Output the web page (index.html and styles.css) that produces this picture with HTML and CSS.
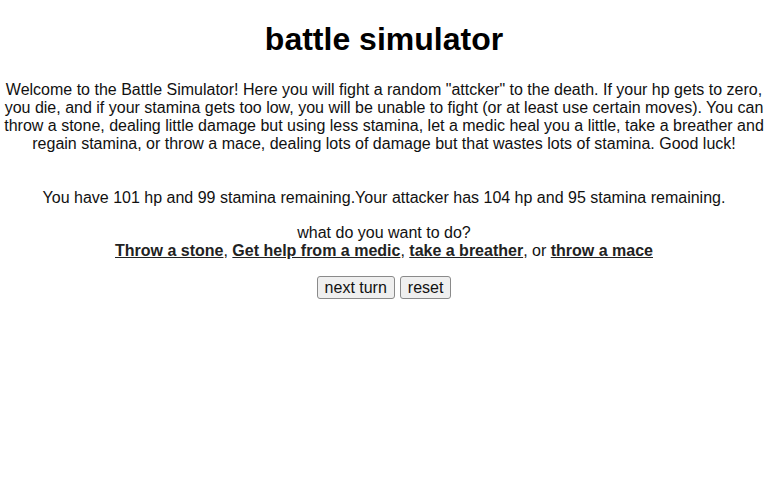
FILE: index.html
```html
<!DOCTYPE html>
<html lang="en">
<head>
<meta charset="utf-8">
<title>battle simulator</title>
<link rel="stylesheet" href="styles.css">
</head>
<body>
<main class="game">
  <h1 class="title">battle simulator</h1>
  <p class="intro">Welcome to the Battle Simulator! Here you will fight a random "attcker" to the death. If your hp gets to zero, you die, and if your stamina gets too low, you will be unable to fight (or at least use certain moves). You can throw a stone, dealing little damage but using less stamina, let a medic heal you a little, take a breather and regain stamina, or throw a mace, dealing lots of damage but that wastes lots of stamina. Good luck!</p>
  <p class="status">You have 101 hp and 99 stamina remaining.Your attacker has 104 hp and 95 stamina remaining.</p>
  <p class="prompt">what do you want to do?<br>
    <a class="move" href="#">Throw a stone</a>, <a class="move" href="#">Get help from a medic</a>, <a class="move" href="#">take a breather</a>, or <a class="move" href="#">throw a mace</a>
  </p>
  <div class="controls">
    <button class="btn" type="button">next turn</button>
    <button class="btn" type="button">reset</button>
  </div>
</main>
</body>
</html>
```

FILE: styles.css
```css
html, body {
  background: #fff;
}

body {
  margin: 0;
  font-family: "Liberation Sans", Arial, sans-serif;
  font-size: 16px;
  color: #111;
  text-align: center;
}

.title {
  font-size: 32px;
  font-weight: bold;
  margin: 21px 0 23px;
  color: #000;
}

.intro {
  margin: 16px 4px 36px;
  line-height: 18px;
}

.status {
  margin: 0 0 17px;
  line-height: 18px;
}

.prompt {
  margin: 0 0 16px;
  line-height: 18px;
}

.move {
  color: #222;
  font-weight: bold;
}

.controls {
  display: flex;
  justify-content: center;
  gap: 5px;
}

.btn {
  font-family: "Liberation Sans", Arial, sans-serif;
  font-size: 16px;
  color: #111;
  background: #efefef;
  border: 1px solid #8a8a8a;
  border-radius: 3px;
  padding: 1px 7px;
  line-height: 19px;
}
```
